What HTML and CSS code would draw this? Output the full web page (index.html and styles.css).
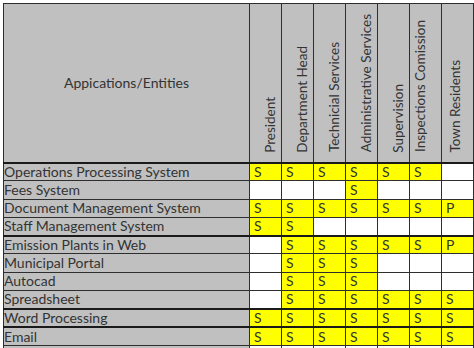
FILE: index.html
```html
<!DOCTYPE html>
<html>
<head>
<meta charset="utf-8">
<link rel="stylesheet" href="styles.css">
</head>
<body>
<table class="matrix">
  <colgroup>
    <col class="col-label">
    <col class="col-ent"><col class="col-ent"><col class="col-ent"><col class="col-ent"><col class="col-ent"><col class="col-ent"><col class="col-ent">
  </colgroup>
  <thead>
    <tr class="head-row">
      <th class="corner">Appications/Entities</th>
      <th class="ent"><div class="ent-box nudge-r"><span class="vtext">President</span></div></th>
      <th class="ent"><div class="ent-box nudge-r"><span class="vtext">Department Head</span></div></th>
      <th class="ent"><div class="ent-box nudge-r"><span class="vtext">Technicial Services</span></div></th>
      <th class="ent"><div class="ent-box nudge-r"><span class="vtext">Administrative Services</span></div></th>
      <th class="ent"><div class="ent-box nudge-r"><span class="vtext">Supervision</span></div></th>
      <th class="ent"><div class="ent-box nudge-l"><span class="vtext">Inspections Comission</span></div></th>
      <th class="ent"><div class="ent-box nudge-m"><span class="vtext">Town Residents</span></div></th>
    </tr>
  </thead>
  <tbody>
    <tr class="thick-top">
      <th class="app">Operations Processing System</th>
      <td class="s">S</td><td class="s">S</td><td class="s">S</td><td class="s">S</td><td class="s">S</td><td class="s">S</td><td></td>
    </tr>
    <tr>
      <th class="app">Fees System</th>
      <td></td><td></td><td></td><td class="s">S</td><td></td><td></td><td></td>
    </tr>
    <tr>
      <th class="app">Document Management System</th>
      <td class="s">S</td><td class="s">S</td><td class="s">S</td><td class="s">S</td><td class="s">S</td><td class="s">S</td><td class="s">P</td>
    </tr>
    <tr>
      <th class="app">Staff Management System</th>
      <td class="s">S</td><td class="s">S</td><td></td><td></td><td></td><td></td><td></td>
    </tr>
    <tr class="thick-top">
      <th class="app">Emission Plants in Web</th>
      <td></td><td class="s">S</td><td class="s">S</td><td class="s">S</td><td class="s">S</td><td class="s">S</td><td class="s">P</td>
    </tr>
    <tr>
      <th class="app">Municipal Portal</th>
      <td></td><td class="s">S</td><td class="s">S</td><td class="s">S</td><td></td><td></td><td></td>
    </tr>
    <tr>
      <th class="app">Autocad</th>
      <td></td><td class="s">S</td><td class="s">S</td><td class="s">S</td><td></td><td></td><td></td>
    </tr>
    <tr>
      <th class="app">Spreadsheet</th>
      <td></td><td class="s">S</td><td class="s">S</td><td class="s">S</td><td class="s">S</td><td class="s">S</td><td class="s">S</td>
    </tr>
    <tr class="thick-top">
      <th class="app">Word Processing</th>
      <td class="s">S</td><td class="s">S</td><td class="s">S</td><td class="s">S</td><td class="s">S</td><td class="s">S</td><td class="s">S</td>
    </tr>
    <tr class="thick-top">
      <th class="app">Email</th>
      <td class="s">S</td><td class="s">S</td><td class="s">S</td><td class="s">S</td><td class="s">S</td><td class="s">S</td><td class="s">S</td>
    </tr>
    <tr>
      <th class="app"></th>
      <td></td><td></td><td></td><td></td><td></td><td></td><td></td>
    </tr>
  </tbody>
</table>
</body>
</html>
```
FILE: styles.css
```css
html, body {
  margin: 0;
  background: #ffffff;
}

body {
  padding: 3px 0 0 3px;
  font-family: Lato, "Open Sans", "Liberation Sans", sans-serif;
}

.matrix {
  border-collapse: collapse;
  table-layout: fixed;
  width: 470px;
  font-size: 14px;
  color: #333333;
}

.col-label { width: 246px; }
.col-ent { width: 32px; }

.matrix th,
.matrix td {
  border: 1px solid #2e2e2e;
  padding: 0;
  line-height: 16px;
}

.head-row { height: 159px; }

.corner {
  background: #c0c0c0;
  font-weight: normal;
  text-align: center;
  vertical-align: middle;
  border-right-width: 2px;
}

.ent {
  background: #c0c0c0;
  font-weight: normal;
  vertical-align: bottom;
  border-color: #3a3a3a;
  font-size: 13.5px;
}

.ent-box {
  display: flex;
  justify-content: center;
  align-items: flex-end;
  padding-bottom: 9px;
}

.nudge-r { padding-left: 9px; }
.nudge-l { padding-right: 12px; }
.nudge-m { padding-right: 6px; }

.vtext {
  writing-mode: vertical-rl;
  transform: rotate(180deg);
  white-space: nowrap;
}

.matrix tbody tr { height: 18.3px; }

.app {
  background: #c0c0c0;
  font-weight: normal;
  text-align: left;
  padding-left: 2px;
  white-space: nowrap;
  border-right-width: 2px;
}

.matrix td {
  background: #ffffff;
  padding-left: 4px;
}

.matrix td.s { background: #ffff00; }

.thick-top th,
.thick-top td {
  border-top: 2px solid #1a1a1a;
}
```
